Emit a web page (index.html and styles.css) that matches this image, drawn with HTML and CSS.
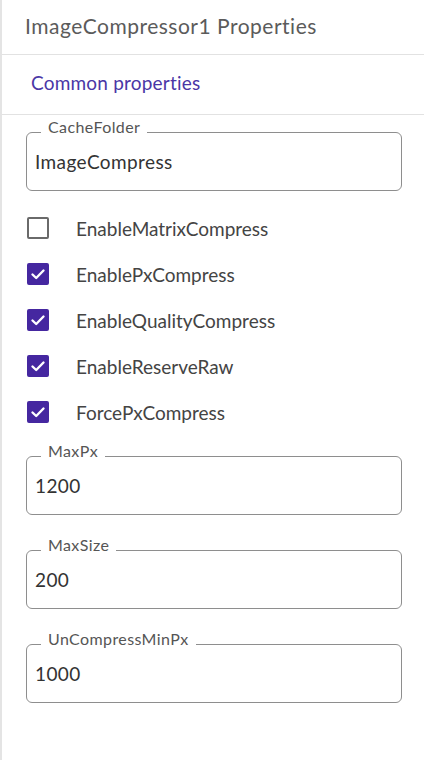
FILE: index.html
```html
<!DOCTYPE html>
<html lang="en">
<head>
<meta charset="utf-8">
<title>ImageCompressor1 Properties</title>
<link rel="stylesheet" href="styles.css">
</head>
<body>
<div class="panel">
  <div class="panel-header">ImageCompressor1 Properties</div>
  <div class="section-title">Common properties</div>
  <div class="props">
    <div class="field field-first">
      <span class="field-label">CacheFolder</span>
      <span class="field-value">ImageCompress</span>
    </div>
    <div class="checks">
      <div class="check-row">
        <span class="box"></span>
        <span class="check-label">EnableMatrixCompress</span>
      </div>
      <div class="check-row">
        <span class="box checked"><svg viewBox="0 0 22 22" width="22" height="22"><path d="M5.5 11.5 L9.2 15 L16.5 7.5" fill="none" stroke="#fff" stroke-width="2.4" stroke-linecap="round" stroke-linejoin="round"/></svg></span>
        <span class="check-label">EnablePxCompress</span>
      </div>
      <div class="check-row">
        <span class="box checked"><svg viewBox="0 0 22 22" width="22" height="22"><path d="M5.5 11.5 L9.2 15 L16.5 7.5" fill="none" stroke="#fff" stroke-width="2.4" stroke-linecap="round" stroke-linejoin="round"/></svg></span>
        <span class="check-label">EnableQualityCompress</span>
      </div>
      <div class="check-row">
        <span class="box checked"><svg viewBox="0 0 22 22" width="22" height="22"><path d="M5.5 11.5 L9.2 15 L16.5 7.5" fill="none" stroke="#fff" stroke-width="2.4" stroke-linecap="round" stroke-linejoin="round"/></svg></span>
        <span class="check-label">EnableReserveRaw</span>
      </div>
      <div class="check-row">
        <span class="box checked"><svg viewBox="0 0 22 22" width="22" height="22"><path d="M5.5 11.5 L9.2 15 L16.5 7.5" fill="none" stroke="#fff" stroke-width="2.4" stroke-linecap="round" stroke-linejoin="round"/></svg></span>
        <span class="check-label">ForcePxCompress</span>
      </div>
    </div>
    <div class="field field-after-checks">
      <span class="field-label">MaxPx</span>
      <span class="field-value">1200</span>
    </div>
    <div class="field field-next">
      <span class="field-label">MaxSize</span>
      <span class="field-value">200</span>
    </div>
    <div class="field field-next">
      <span class="field-label">UnCompressMinPx</span>
      <span class="field-value">1000</span>
    </div>
  </div>
</div>
</body>
</html>
```
FILE: styles.css
```css
html, body {
  margin: 0;
  padding: 0;
  background: #ffffff;
}

body {
  font-family: Lato, "Open Sans", sans-serif;
}

.panel {
  width: 422px;
  height: 760px;
  border-left: 2px solid #e4e4e4;
  background: #ffffff;
}

.panel-header {
  height: 50px;
  padding-bottom: 4px;
  display: flex;
  align-items: center;
  padding-left: 23px;
  font-size: 21px;
  letter-spacing: 0.5px;
  color: #5b5b5b;
  border-bottom: 1px solid #e2e2e2;
}

.section-title {
  height: 55px;
  padding-bottom: 4px;
  display: flex;
  align-items: center;
  padding-left: 29px;
  font-size: 19px;
  letter-spacing: 0.2px;
  color: #4a36a6;
  border-bottom: 1px solid #e2e2e2;
}

.props {
  padding: 0 22px 0 24px;
  display: flex;
  flex-direction: column;
}

.field {
  position: relative;
  height: 57px;
  border: 1px solid #8e8e8e;
  border-radius: 6px;
  display: flex;
  align-items: center;
  padding-left: 8px;
}

.field-first {
  margin-top: 17px;
}

.field-after-checks {
  margin-top: 21px;
}

.field-next {
  margin-top: 35px;
}

.field-label {
  position: absolute;
  top: -15px;
  left: 14px;
  padding: 0 7px;
  background: #ffffff;
  font-size: 16px;
  line-height: 17px;
  letter-spacing: 0.4px;
  color: #555555;
}

.field-value {
  font-size: 19px;
  letter-spacing: 0.4px;
  color: #333333;
}

.checks {
  margin-top: 14px;
  display: flex;
  flex-direction: column;
}

.check-row {
  height: 46px;
  display: flex;
  align-items: center;
  padding-left: 1px;
}

.box {
  width: 22px;
  height: 22px;
  box-sizing: border-box;
  border: 2px solid #6a6a6a;
  border-radius: 2px;
  flex: none;
  display: flex;
  align-items: center;
  justify-content: center;
}

.box.checked {
  background: #4527a0;
  border-color: #4527a0;
}

.box svg {
  display: block;
  flex: none;
}

.check-label {
  margin-left: 27px;
  font-size: 19px;
  color: #444444;
}
```
